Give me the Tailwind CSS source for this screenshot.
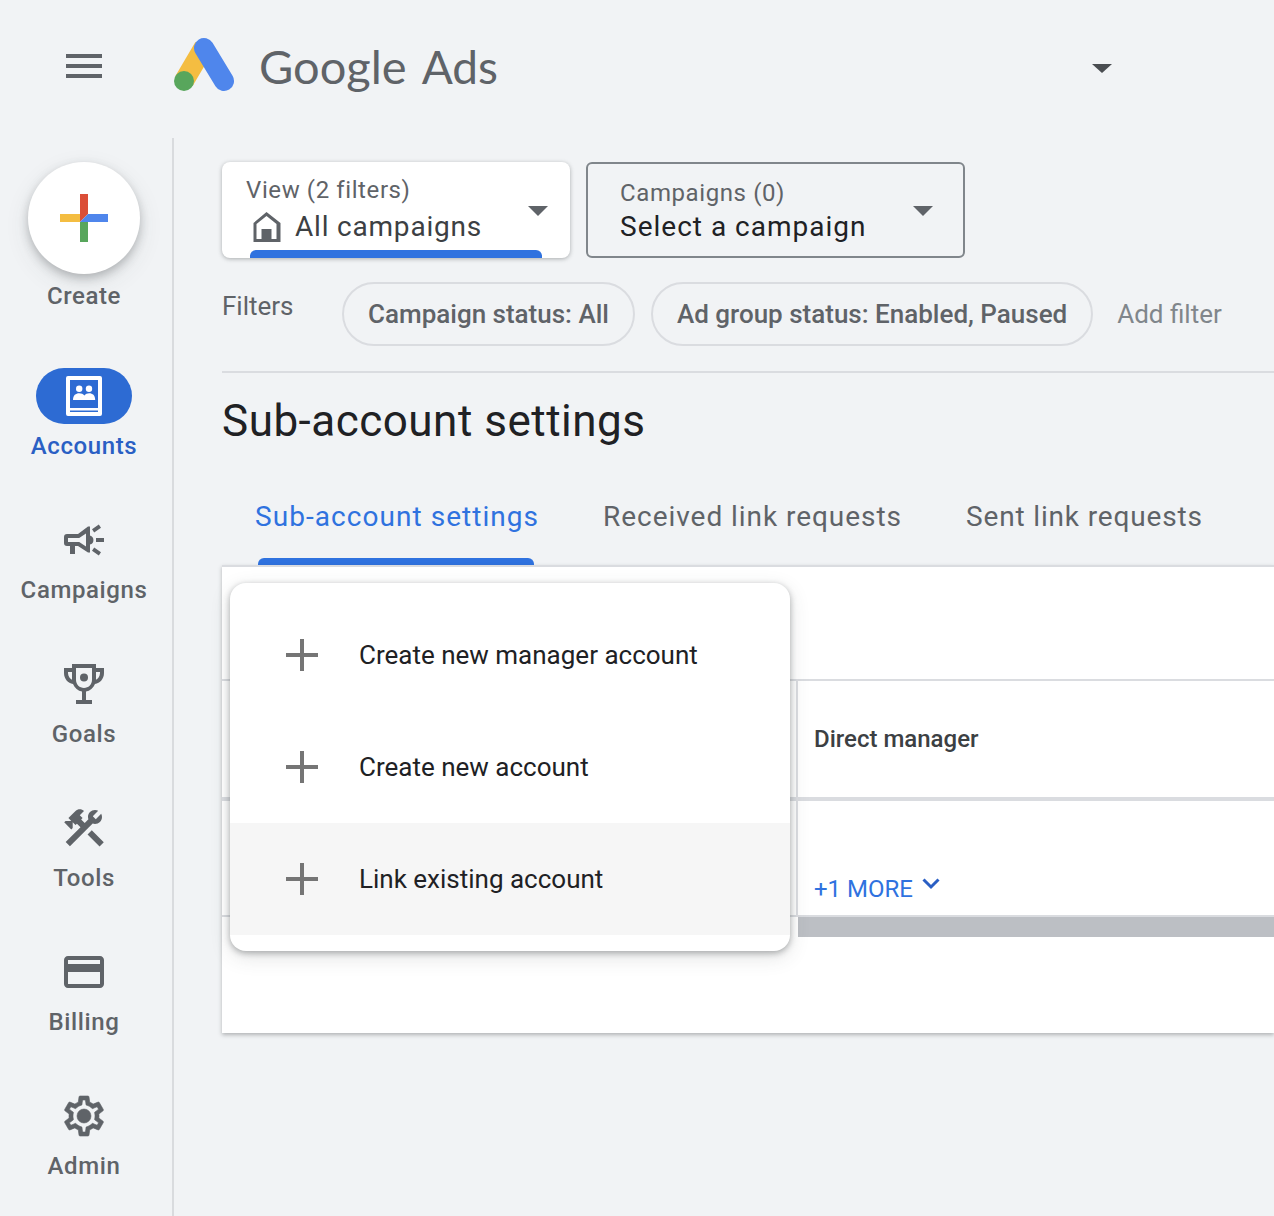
<!DOCTYPE html>
<html lang="en">
<head>
    <meta charset="UTF-8">
    <title>Google Ads - Sub-account settings</title>
    <script src="https://cdn.jsdelivr.net/npm/@tailwindcss/browser@4"></script>
</head>
<body class="bg-[#f1f3f5] font-[Roboto,sans-serif] text-[#5f6368] h-screen overflow-hidden flex flex-col">

<!-- top bar -->
<header class="h-[138px] shrink-0 flex items-start">
    <div class="w-[168px] pt-[42px] flex justify-center">
        <svg class="w-12 h-12" viewBox="0 0 24 24" fill="#5f6368"><path d="M3 18h18v-2H3v2zm0-5h18v-2H3v2zm0-7v2h18V6H3z"/></svg>
    </div>
    <svg class="w-[64px] h-[60px] mt-[36px] ml-[6px]" viewBox="174 36 64 60">
        <path d="M184 81L204 47" stroke="#f4bd41" stroke-width="20" fill="none"/>
        <path d="M204 48L224 81" stroke="#4f86ec" stroke-width="20" stroke-linecap="round" fill="none"/>
        <circle cx="184" cy="81" r="10" fill="#58a65c"/>
    </svg>
    <div class="ml-[21px] mt-[36px] text-[47px] leading-[60px] font-[Lato,sans-serif] text-[#5f6368] whitespace-nowrap">Google <span class="ml-[3px] text-[46px]">Ads</span></div>
    <div class="ml-auto mr-[162px] mt-[64px] w-0 h-0 border-x-[10px] border-x-transparent border-t-[9px] border-t-[#4a4d51]"></div>
</header>

<div class="flex flex-1 min-h-0">
    <!-- left rail -->
    <nav class="w-[174px] shrink-0 border-r-2 border-[#d9dbde] flex flex-col items-center pr-[4px] text-[24px] leading-[28px] font-medium tracking-[0.6px]">
        <div class="mt-[24px] w-[112px] h-[112px] rounded-full bg-white shadow-[0_4px_10px_rgba(60,64,67,0.3),0_8px_24px_rgba(60,64,67,0.1)] flex items-center justify-center">
            <svg class="w-12 h-12" viewBox="60 194 48 48">
                <path d="M80 194h8v20l-8 8z" fill="#db4e37"/>
                <path d="M108 214v8H80l8-8z" fill="#4f86ec"/>
                <path d="M60 214h20v8H60z" fill="#f4bd41"/>
                <path d="M80 222h8v20h-8z" fill="#58a65c"/>
            </svg>
        </div>
        <div class="mt-[8px]">Create</div>

        <div class="mt-[58px] w-[96px] h-[56px] rounded-full bg-[#2d6bd3] flex items-center justify-center">
            <svg class="w-12 h-12" viewBox="0 0 24 24" fill="#fff" fill-rule="evenodd">
                <path d="M4 2h16a1 1 0 0 1 1 1v18a1 1 0 0 1-1 1H4a1 1 0 0 1-1-1V3a1 1 0 0 1 1-1zM5 4v14h14V4zM5 19.3V20h14v-.7z"/>
                <circle cx="9.6" cy="8.4" r="1.6"/><circle cx="14.5" cy="8.4" r="1.6"/>
                <path d="M6.5 14c0-2.4 1.4-3.4 3.1-3.4 1.1 0 2 .4 2.6 1.2.6-.8 1.4-1.2 2.4-1.2 1.7 0 3 1 3 3.4z"/>
            </svg>
        </div>
        <div class="mt-[8px] text-[#2a5fc4]">Accounts</div>

        <svg class="w-12 h-12 mt-[56px]" viewBox="0 0 24 24" fill="#5f6368" fill-rule="evenodd">
            <path d="M3.5 9H9l5-3.7h1v4.4a2.4 2.4 0 0 1 0 4.600v4h-1L9 15H7.5v4H5v-4H3.5A1.5 1.5 0 0 1 2 13.5v-3A1.5 1.5 0 0 1 3.5 9zM4 11v2h5.600l3.400 2.200V8.800L9.600 11z"/>
            <path d="M18 11h4v2h-4zM16 6.600l3.400-2.300 1.100 1.600-3.400 2.300zM16 17.400l1.100-1.600 3.400 2.300-1.100 1.600z"/>
        </svg>
        <div class="mt-[12px]">Campaigns</div>

        <svg class="w-12 h-12 mt-[56px]" viewBox="0 0 24 24" fill="#5f6368" fill-rule="evenodd">
            <path d="M6 2h12v2h4v2.500c0 3-2 5-4.500 5.500-.8 2-2.500 3.400-4.500 3.800V20h3v2H8v-2h3v-4.200C9 15.400 7.300 14 6.500 12 4 11.500 2 9.500 2 6.500V4h4zM4 6v.5c0 1.500 1 2.900 2 3.400V6zM18 6v3.900c1-.5 2-1.900 2-3.400V6zM8 4v6c0 2.200 1.800 4 4 4s4-1.800 4-4V4z"/>
            <circle cx="12" cy="8.800" r="2"/>
        </svg>
        <div class="mt-[12px]">Goals</div>

        <svg class="w-12 h-12 mt-[56px]" viewBox="0 0 24 24" fill="#5f6368"><path d="M13.78 15.3l6 6 2.11-2.16-6-6zM17.5 10c1.93 0 3.5-1.57 3.5-3.5 0-.58-.16-1.12-.41-1.6l-2.7 2.7-1.49-1.49 2.7-2.7c-.48-.25-1.02-.41-1.6-.41C15.57 3 14 4.57 14 6.500c0 .41.08.8.21 1.16l-1.85 1.85-1.78-1.78.71-.71-1.41-1.41L12 3.490c-1.17-1.17-3.07-1.17-4.24 0L4.220 7.030l1.41 1.41H2.810l-.71.71 3.540 3.540.71-.71V9.150l1.41 1.41.71-.71 1.78 1.78-7.410 7.410 2.120 2.120L16.340 9.790c.36.13.75.21 1.160.21z"/></svg>
        <div class="mt-[12px]">Tools</div>

        <svg class="w-12 h-12 mt-[56px]" viewBox="0 0 24 24" fill="#5f6368"><path d="M20 4H4c-1.110 0-1.990.89-1.990 2L2 18c0 1.110.89 2 2 2h16c1.110 0 2-.89 2-2V6c0-1.110-.89-2-2-2zm0 14H4v-6h16v6zm0-10H4V6h16v2z"/></svg>
        <div class="mt-[12px]">Billing</div>

        <svg class="w-12 h-12 mt-[56px]" viewBox="0 0 24 24" fill="#5f6368" stroke="#5f6368" stroke-width=".3"><path d="M19.43 12.98c.04-.32.07-.64.07-.98 0-.34-.03-.66-.07-.98l2.11-1.65c.19-.15.24-.42.12-.64l-2-3.46c-.09-.16-.26-.25-.44-.25-.06 0-.12.01-.17.03l-2.49 1c-.52-.4-1.08-.73-1.69-.98l-.38-2.65C14.46 2.18 14.25 2 14 2h-4c-.25 0-.46.18-.49.42l-.38 2.65c-.61.25-1.17.59-1.69.98l-2.49-1c-.06-.02-.12-.03-.18-.03-.17 0-.34.09-.43.25l-2 3.46c-.13.22-.07.49.12.64l2.11 1.65c-.04.32-.07.65-.07.98 0 .33.03.66.07.98l-2.11 1.65c-.19.15-.24.42-.12.64l2 3.46c.09.16.26.25.44.25.06 0 .12-.01.17-.03l2.49-1c.52.4 1.08.73 1.69.98l.38 2.65c.03.24.24.42.49.42h4c.25 0 .46-.18.49-.42l.38-2.65c.61-.25 1.17-.59 1.69-.98l2.49 1c.06.02.12.03.18.03.17 0 .34-.09.43-.25l2-3.46c.12-.22.07-.49-.12-.64l-2.11-1.65zm-1.98-1.71c.04.31.05.52.05.73 0 .21-.02.43-.05.73l-.14 1.13.89.7 1.08.84-.7 1.21-1.27-.51-1.04-.42-.9.68c-.43.32-.84.56-1.25.73l-1.06.43-.16 1.13-.2 1.35h-1.4l-.19-1.35-.16-1.13-1.06-.43c-.43-.18-.83-.41-1.23-.71l-.91-.7-1.06.43-1.27.51-.7-1.21 1.08-.84.89-.7-.14-1.13c-.03-.31-.05-.54-.05-.74s.02-.43.05-.73l.14-1.13-.89-.7-1.08-.84.7-1.21 1.27.51 1.04.42.9-.68c.43-.32.84-.56 1.25-.73l1.06-.43.16-1.13.2-1.35h1.39l.19 1.35.16 1.13 1.06.43c.43.18.83.41 1.23.71l.91.7 1.06-.43 1.27-.51.7 1.21-1.07.85-.89.7.14 1.13zM12 8.500a3.500 3.500 0 1 0 0 7 3.500 3.500 0 0 0 0-7z"/></svg>
        <div class="mt-[12px]">Admin</div>
    </nav>

    <!-- main column -->
    <main class="flex-1 min-w-0 pl-[48px] pt-[24px] flex flex-col">
        <div class="flex gap-[16px]">
            <div class="relative w-[348px] h-[96px] bg-white rounded-[8px] shadow-[0_1px_4px_rgba(60,64,67,0.4)] overflow-hidden pl-[24px] pt-[14px]">
                <div class="text-[24px] leading-[28px] tracking-[0.6px]">View (2 filters)</div>
                <div class="flex items-center mt-[7px]">
                    <svg class="w-[30px] h-[32px] ml-[5px] -mt-[1px]" viewBox="0 0 30 32" fill="#5f6368" fill-rule="evenodd"><path d="M15 1l14 11v19H2V12zM15 5L5 13v15h5V18h10v10h5V13z" transform="translate(0.500 0)"/></svg>
                    <div class="ml-[14px] text-[28px] leading-[32px] tracking-[0.8px] text-[#3c4043]">All campaigns</div>
                </div>
                <div class="absolute left-[306px] top-[44px] w-0 h-0 border-x-[10px] border-x-transparent border-t-[10px] border-t-[#5f6368]"></div>
                <div class="absolute left-[28px] bottom-0 w-[292px] h-[8px] bg-[#2f72df] rounded-t-[6px]"></div>
            </div>
            <div class="relative w-[379px] h-[96px] rounded-[6px] border-2 border-[#80868b] pl-[32px] pt-[15px]">
                <div class="text-[24px] leading-[28px] tracking-[0.6px]">Campaigns (0)</div>
                <div class="mt-[4px] text-[28px] leading-[32px] tracking-[1px] text-[#202124]">Select a campaign</div>
                <div class="absolute left-[325px] top-[42px] w-0 h-0 border-x-[10px] border-x-transparent border-t-[10px] border-t-[#5f6368]"></div>
            </div>
        </div>

        <div class="flex items-start mt-[24px] text-[26px]">
            <div class="w-[120px] pt-[8px] leading-[32px]">Filters</div>
            <div class="h-[64px] px-[24px] flex items-center rounded-full border-2 border-[#dadce0] font-medium whitespace-nowrap">Campaign status: All</div>
            <div class="h-[64px] ml-[16px] px-[24px] flex items-center rounded-full border-2 border-[#dadce0] font-medium whitespace-nowrap">Ad group status: Enabled, Paused</div>
            <div class="h-[64px] ml-[24px] flex items-center text-[#80868b] whitespace-nowrap">Add filter</div>
        </div>

        <div class="mt-[25px] border-t-2 border-[#dadce0]"></div>
        <h1 class="mt-[20px] text-[44px] leading-[56px] font-normal tracking-[0.5px] text-[#202124] whitespace-nowrap">Sub-account settings</h1>

        <div class="flex mt-[22px] h-[94px] text-[28px] whitespace-nowrap">
            <div class="pl-[33px] pr-[32px] flex flex-col tracking-[1.05px] text-[#2f72df]">
                <div class="flex-1 flex items-center pt-[4px]">Sub-account settings</div>
                <div class="ml-[3px] mr-[5px] h-[7px] bg-[#2f72df] rounded-t-[6px]"></div>
            </div>
            <div class="px-[32px] flex items-center pb-[3px] tracking-[0.95px]">Received link requests</div>
            <div class="px-[32px] flex items-center pb-[3px] tracking-[0.85px]">Sent link requests</div>
        </div>

        <!-- table panel -->
        <section class="relative h-[468px] bg-white border-t-2 border-[#dadce0] shadow-[0_2px_4px_rgba(60,64,67,0.35)]">
            <div class="h-[112px]"></div>
            <div class="h-[122px] border-t-2 border-b-4 border-[#dadce0] flex">
                <div class="w-[576px] border-r-2 border-[#dadce0]"></div>
                <div class="pl-[16px] flex items-center text-[24px] font-medium text-[#3c4043] whitespace-nowrap">Direct manager</div>
            </div>
            <div class="h-[116px] border-b-2 border-[#dadce0] flex">
                <div class="w-[576px] border-r-2 border-[#dadce0]"></div>
                <div class="pl-[16px] pt-[72px] flex items-start text-[24px] leading-[32px] text-[#2f72df] whitespace-nowrap">
                    +1 MORE
                    <svg class="w-[18px] h-[12px] ml-[9px] mt-[5px]" viewBox="0 0 18 12" fill="none" stroke="#2a5fc4" stroke-width="3"><path d="M1.500 1.500L9 9l7.500-7.500"/></svg>
                </div>
            </div>
            <div class="ml-[576px] h-[20px] bg-[#bcbfc4]"></div>

            <!-- create menu -->
            <div class="absolute left-[8px] top-[16px] w-[560px] h-[368px] py-[16px] bg-white rounded-[16px] shadow-[0_2px_6px_rgba(60,64,67,0.4),0_6px_20px_rgba(60,64,67,0.15)] text-[26px] text-[#202124] whitespace-nowrap">
                <div class="h-[112px] flex items-center pl-[56px]">
                    <svg class="w-[32px] h-[32px] mr-[41px]" viewBox="0 0 32 32" fill="#757575"><path d="M14 0h4v14h14v4H18v14h-4V18H0v-4h14z"/></svg>
                    Create new manager account
                </div>
                <div class="h-[112px] flex items-center pl-[56px]">
                    <svg class="w-[32px] h-[32px] mr-[41px]" viewBox="0 0 32 32" fill="#757575"><path d="M14 0h4v14h14v4H18v14h-4V18H0v-4h14z"/></svg>
                    Create new account
                </div>
                <div class="h-[112px] flex items-center pl-[56px] bg-[#f6f6f6]">
                    <svg class="w-[32px] h-[32px] mr-[41px]" viewBox="0 0 32 32" fill="#757575"><path d="M14 0h4v14h14v4H18v14h-4V18H0v-4h14z"/></svg>
                    Link existing account
                </div>
            </div>
        </section>
    </main>
</div>

</body>
</html>
